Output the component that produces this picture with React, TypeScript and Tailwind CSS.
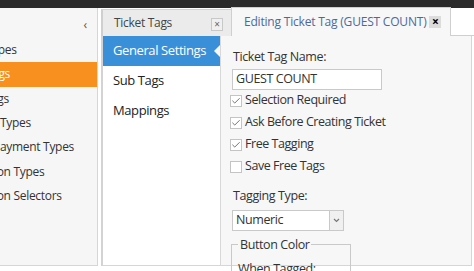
import { Check } from 'lucide-react';

const font = { fontFamily: '"Open Sans", "Noto Sans", sans-serif' };

const leftItems = [
  { text: 'Ticket Types', ml: '-ml-[48px]' },
  { text: 'Ticket Tags', ml: '-ml-[48px]', active: true },
  { text: 'Order Tags', ml: '-ml-[50px]' },
  { text: 'Account Types', ml: '-ml-[46px]' },
  { text: 'Payment Types', ml: '-ml-[7px]' },
  { text: 'Calculation Types', ml: '-ml-[48px]' },
  { text: 'Calculation Selectors', ml: '-ml-[48px]' },
];

function CheckRow({ label, checked }: { label: string; checked: boolean }) {
  return (
    <div className="flex items-center h-[22px] -ml-[2px]">
      <span className="w-[12px] h-[12px] border border-[#c4c4c4] bg-white flex items-center justify-center">
        {checked && <Check size={10} strokeWidth={2.2} className="text-[#666]" />}
      </span>
      <span className="ml-[3px] text-[12.5px] text-[#333] tracking-[-0.45px]">{label}</span>
    </div>
  );
}

export default function App() {
  return (
    <div className="w-[474px] h-[271px] bg-white overflow-hidden flex flex-col" style={font}>
      <div className="h-[8px] bg-[#2b2b2b] shrink-0" />
      <div className="flex h-[258px]">
        {/* left list */}
        <div className="w-[98px] bg-[#f6f6f6] border-r border-b border-[#d6d6d6] overflow-hidden shrink-0">
          <div className="h-[30px] flex items-center justify-end pr-[10px] pt-[3px] text-[12px] text-[#555]">‹</div>
          {leftItems.map((it) => (
            <div
              key={it.text}
              className={`h-[24.3px] flex items-center whitespace-nowrap text-[12px] tracking-[-0.3px] ${
                it.active ? 'bg-[#f7901e] text-white' : 'text-[#333]'
              }`}
            >
              <span className={it.ml}>{it.text}</span>
            </div>
          ))}
        </div>

        <div className="w-[3px] shrink-0" />

        {/* main area */}
        <div className="flex-1 flex flex-col min-w-0">
          {/* tab strip */}
          <div className="h-[28px] flex items-end border-b border-[#cfcfcf] shrink-0">
            <div className="w-[130px] h-[27px] bg-[#ebebeb] border-t border-l-2 border-[#d3d3d3] border-l-[#cfcfcf] flex items-center pl-[11px] pr-[8px] justify-between -mb-px">
              <span className="text-[12px] text-[#444] tracking-[-0.3px]">Ticket Tags</span>
              <span className="w-[12px] h-[13px] mt-[2px] border border-[#c8c8c8] bg-[#f0f0f0] flex items-center justify-center text-[10px] leading-none text-[#666]">×</span>
            </div>
            <div className="h-[29px] w-[220px] bg-[#f7f7f7] border border-b-0 border-[#cfcfcf] flex items-center pl-[12px] -mb-px gap-[3px]">
              <span className="text-[12px] text-[#4a6a9c] tracking-[-0.2px] whitespace-nowrap">Editing Ticket Tag (GUEST COUNT)</span>
              <span className="w-[12px] h-[12px] bg-[#dcdcdc] flex items-center justify-center text-[12px] font-bold leading-none text-black">×</span>
            </div>
          </div>

          <div className="flex flex-1 min-h-0">
            {/* middle menu */}
            <div className="w-[120px] bg-white border-l-2 border-[#d3d3d3] border-r border-r-[#d8d8d8] border-b border-b-[#d6d6d6] shrink-0">
              <div className="relative h-[30px] bg-[#3a8fd9] flex items-center pl-[10px] text-white text-[13px] tracking-[-0.4px] whitespace-nowrap">
                General Settings
                <span className="absolute right-0 top-[9px] w-0 h-0 border-y-[6px] border-y-transparent border-r-[6px] border-r-[#f7f7f7]" />
              </div>
              <div className="h-[30px] flex items-center pl-[10px] text-[13px] text-[#222] tracking-[-0.4px]">Sub Tags</div>
              <div className="h-[30px] flex items-center pl-[10px] text-[13px] text-[#222] tracking-[-0.4px]">Mappings</div>
            </div>

            {/* edit form */}
            <div className="flex-1 bg-[#f7f7f7] border-r border-b border-[#d6d6d6] mr-[2px] pl-[11px] pt-[11px] flex flex-col">
              <div className="text-[12.5px] text-[#333] tracking-[-0.4px] h-[20px] leading-[20px] pl-[1px]">Ticket Tag Name:</div>
              <div className="w-[150px] h-[21px] mt-[2px] bg-white border border-[#c9c9c9] flex items-center pl-[3px] text-[12.5px] text-[#333] tracking-[-0.4px]">
                GUEST COUNT
              </div>
              <div>
                <CheckRow label="Selection Required" checked />
                <CheckRow label="Ask Before Creating Ticket" checked />
                <CheckRow label="Free Tagging" checked />
                <CheckRow label="Save Free Tags" checked={false} />
              </div>
              <div className="text-[12.5px] text-[#333] tracking-[-0.4px] h-[20px] leading-[20px] mt-[8px] pl-[1px]">Tagging Type:</div>
              <div className="w-[112px] h-[22px] mt-[4px] bg-white border border-[#c9c9c9] flex items-center">
                <span className="flex-1 pl-[3px] text-[12.5px] text-[#333] tracking-[-0.4px]">Numeric</span>
                <span className="w-[14px] h-full border-l border-[#c9c9c9] bg-[#f0f0f0] flex items-center justify-center">
                  <svg width="7" height="5" viewBox="0 0 7 5" fill="none" stroke="#777" strokeWidth="1.2">
                    <path d="M1 1l2.5 2.5L6 1" />
                  </svg>
                </span>
              </div>
              <fieldset className="w-[120px] mt-[6px] border border-[#c9c9c9] -ml-[1px] pl-[6px] h-[40px]">
                <legend className="px-[2px] text-[12.5px] text-[#333] tracking-[-0.4px] leading-[16px]">Button Color</legend>
                <div className="text-[12.5px] text-[#333] tracking-[-0.4px] mt-[7px]">When Tagged:</div>
              </fieldset>
            </div>
          </div>
        </div>
      </div>
    </div>
  );
}
